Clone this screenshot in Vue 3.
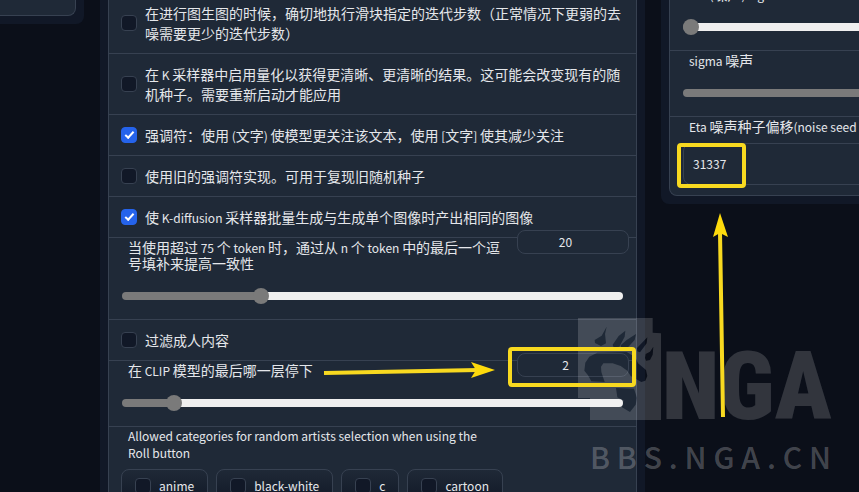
<script setup>
import { ref } from 'vue'

const toggles = ref([
  { id: 'steps', on: false, text: '在进行图生图的时候，确切地执行滑块指定的迭代步数（正常情况下更弱的去噪需要更少的迭代步数）' },
  { id: 'quant', on: false, text: '在 K 采样器中启用量化以获得更清晰、更清晰的结果。这可能会改变现有的随机种子。需要重新启动才能应用' },
  { id: 'emphasis', on: true, text: '强调符：使用 (文字) 使模型更关注该文本，使用 [文字] 使其减少关注' },
  { id: 'old-emphasis', on: false, text: '使用旧的强调符实现。可用于复现旧随机种子' },
  { id: 'batch', on: true, text: '使 K-diffusion 采样器批量生成与生成单个图像时产出相同的图像' },
])
const filterAdult = ref(false)
const padding = ref(20)
const clipLayers = ref(2)
const eta = ref(0)
const sigma = ref(1)
const seedDelta = ref('31337')
const categories = ref([
  { name: 'anime', on: false },
  { name: 'black-white', on: false },
  { name: 'c', on: false },
  { name: 'cartoon', on: false },
])

// Splits a label into runs so that Latin text can be set a size smaller than Han text.
function runs(text) {
  return text.match(/[\x20-\x7e]+|[^\x20-\x7e]+/g).map((t) => ({ t, latin: /^[\x20-\x7e]/.test(t) }))
}
function fill(value, min, max) {
  return { '--f': (value - min) / (max - min) }
}
</script>

<template>
  <main class="page">
    <section class="column column-left">
      <div class="panel"></div>
    </section>

    <section class="column column-main">
      <div class="panel">
        <div v-for="item in toggles" :key="item.id" class="row check-row">
          <input :id="item.id" v-model="item.on" type="checkbox" />
          <label :for="item.id"><span v-for="(r, i) in runs(item.text)" :key="i" :class="{ latin: r.latin }">{{ r.t }}</span></label>
        </div>

        <div class="row slider-row">
          <div class="slider-head">
            <label id="padding-label" for="padding"><span v-for="(r, i) in runs('当使用超过 75 个 token 时，通过从 n 个 token 中的最后一个逗号填补来提高一致性')" :key="i" :class="{ latin: r.latin }">{{ r.t }}</span></label>
            <input v-model.number="padding" class="number" type="number" min="0" max="74" aria-labelledby="padding-label" />
          </div>
          <input id="padding" v-model.number="padding" type="range" min="0" max="74" :style="fill(padding, 0, 74)" />
        </div>

        <div class="row check-row">
          <input id="filter" v-model="filterAdult" type="checkbox" />
          <label for="filter">过滤成人内容</label>
        </div>

        <div class="row slider-row">
          <div class="slider-head">
            <label id="clip-label" for="clip"><span v-for="(r, i) in runs('在 CLIP 模型的最后哪一层停下')" :key="i" :class="{ latin: r.latin }">{{ r.t }}</span></label>
            <input v-model.number="clipLayers" class="number" type="number" min="1" max="12" aria-labelledby="clip-label" />
          </div>
          <input id="clip" v-model.number="clipLayers" type="range" min="1" max="12" :style="fill(clipLayers, 1, 12)" />
        </div>

        <fieldset class="row group">
          <legend>Allowed categories for random artists selection when using the Roll button</legend>
          <div class="chips">
            <label v-for="c in categories" :key="c.name" class="chip">
              <input v-model="c.on" type="checkbox" />
              <span>{{ c.name }}</span>
            </label>
          </div>
        </fieldset>
      </div>
    </section>

    <section class="column column-right">
      <div class="panel">
        <div class="row slider-row">
          <div class="slider-head">
            <label for="eta"><span class="latin">Eta (</span>噪声<span class="latin">) sigma</span></label>
          </div>
          <input id="eta" v-model.number="eta" type="range" min="0" max="1" step="0.01" :style="fill(eta, 0, 1)" />
        </div>
        <div class="row slider-row">
          <div class="slider-head">
            <label for="sigma"><span class="latin">sigma </span>噪声</label>
          </div>
          <input id="sigma" v-model.number="sigma" type="range" min="0" max="1" step="0.01" :style="fill(sigma, 0, 1)" />
        </div>
        <div class="row seed-row">
          <label for="seed"><span class="latin">Eta </span>噪声种子偏移<span class="latin">(noise seed</span></label>
          <input id="seed" v-model="seedDelta" class="seed" type="text" />
        </div>
      </div>
    </section>

    <div class="watermark" aria-hidden="true">
      <div class="brand">
        <svg class="bear" viewBox="0 0 252 306" width="84" height="102">
          <path
            fill-rule="evenodd"
            d="M0 0H224V44L249 46V306H36V240H0Z
            M86 26 81 48 84 76 69 84 51 75 50 66 71 53Z
            M142 38 140 56 124 86 107 88 104 80 122 54Z
            M174 48 170 66 145 93 130 90 128 82 146 66Z
            M208 58 206 76 186 103 178 100 177 90Z
            M226 86 224 110 216 126 204 128 201 120 203 108 216 101Z
            M19 158 22 134 34 116 58 104 146 102 172 118 180 136 204 156 208 174 202 188 190 192 158 174 148 158 128 144 104 136 76 136 69 146 70 162 80 192 40 190 30 172Z
            M114 210 168 212 177 240 173 260 156 282 132 268 128 258 138 248 118 238Z"
          />
        </svg>
        <span class="brand-name">NGA</span>
      </div>
      <div class="domain"><span v-for="(ch, i) in 'BBS.NGA.CN'" :key="i">{{ ch }}</span></div>
    </div>

    <svg class="notes" width="859" height="492" viewBox="0 0 859 492" aria-hidden="true">
      <rect x="510" y="349" width="124" height="36" rx="2" />
      <rect x="679" y="145" width="65" height="41" rx="2" />
      <path class="shaft" d="M324 373 478 370M723 417 720 232" />
      <path class="head" d="M495 370 471 378 476 370 471 362ZM720 213 728 237 720 233 713 237Z" />
    </svg>
  </main>
</template>

<style>
body {
  background: #0b0f19;
}
</style>

<style scoped>
.page {
  position: relative;
  display: grid;
  grid-template-columns: 84px minmax(0, 1fr) 198px;
  gap: 16px;
  align-items: start;
  height: 100vh;
  overflow: hidden;
  background: #0b0f19;
  color: #e5e7eb;
  font: 14px/20px "Noto Sans CJK SC", sans-serif;
}
.latin {
  font-size: 12px;
  line-height: 12px;
}
.column {
  background: #111827;
  padding: 0 8px 8px;
}
.column-left {
  padding-left: 0;
  border-radius: 0 0 8px 0;
}
.column-left .panel {
  height: 15px;
  border-left: 0;
  border-radius: 0 0 8px 0;
}
.column-right {
  border-radius: 0 0 0 8px;
}
.column-right .panel {
  margin-right: -60px;
}
.panel {
  border: 1px solid #374151;
  border-top: 0;
  border-radius: 0 0 8px 8px;
  background: #1f2937;
}
.row {
  border-bottom: 1px solid #374151;
}
.row:last-child {
  border-bottom: 0;
}
.check-row {
  display: flex;
  align-items: center;
  gap: 8px;
  padding: 10px 12px;
}
.column-main .check-row:first-child {
  padding-top: 3px;
}
input {
  box-sizing: border-box;
  margin: 0;
  color: inherit;
  font: 12px/20px "Noto Sans CJK SC", sans-serif;
}
input[type="checkbox"] {
  appearance: none;
  display: grid;
  place-items: center;
  flex: none;
  width: 16px;
  height: 16px;
  border: 1px solid #374151;
  border-radius: 4px;
  background: #111827;
}
input[type="checkbox"]:checked {
  border-color: #2563eb;
  background: #2563eb;
}
input[type="checkbox"]:checked::before {
  content: "";
  width: 7px;
  height: 3px;
  border: solid #fff;
  border-width: 0 0 2px 2px;
  transform: rotate(-48deg) translate(1px, -1px);
}
.slider-row {
  display: flex;
  flex-direction: column;
  gap: 17px;
  padding: 1px 13px 15px;
}
.slider-head {
  display: flex;
  justify-content: space-between;
  align-items: flex-start;
  gap: 16px;
}
.slider-head label {
  padding-left: 6px;
  line-height: 16px;
}
.number {
  flex: none;
  width: 112px;
  height: 24px;
  margin: -9px -6px -16px 0;
  padding: 0 0 2px;
  border: 1px solid #374151;
  border-radius: 8px;
  background: #1f2937;
  text-align: center;
}
input[type="range"] {
  appearance: none;
  width: 100%;
  height: 16px;
  background: none;
}
input[type="range"]::-webkit-slider-runnable-track {
  height: 8px;
  border-radius: 4px;
  background: linear-gradient(
    to right,
    #7a7a7a calc(8px + (100% - 16px) * var(--f)),
    #efefef calc(8px + (100% - 16px) * var(--f))
  );
}
input[type="range"]::-webkit-slider-thumb {
  appearance: none;
  width: 16px;
  height: 16px;
  margin-top: -4px;
  border-radius: 50%;
  background: #7a7a7a;
}
.column-right .slider-row:first-child {
  margin-top: -15px;
}
.group {
  min-width: 0;
  margin: 0;
  padding: 0 12px 16px;
  border-width: 0;
  font-size: 12px;
}
.group legend {
  float: left;
  box-sizing: border-box;
  width: 376px;
  padding: 0 0 0 7px;
  line-height: 17px;
}
.chips {
  clear: both;
  display: flex;
  flex-wrap: wrap;
  gap: 8px;
  padding-top: 8px;
}
.chip {
  display: flex;
  align-items: center;
  gap: 8px;
  padding: 6px 13px;
  border: 1px solid #374151;
  border-radius: 8px;
  background: linear-gradient(to top, #111827, #1f2937);
}
.seed-row {
  display: flex;
  flex-direction: column;
  gap: 9px;
  padding: 1px 13px 10px;
  white-space: nowrap;
}
.seed-row label {
  padding-left: 6px;
  line-height: 16px;
}
.seed {
  width: 100%;
  height: 42px;
  padding: 0 9px 2px;
  border: 1px solid #374151;
  border-radius: 8px;
  background: #1f2937;
}
.watermark {
  position: absolute;
  right: 28px;
  bottom: 16px;
  width: 253px;
  color: rgb(255 255 255 / 16%);
  pointer-events: none;
}
.brand {
  display: flex;
  justify-content: space-between;
  align-items: flex-end;
}
.bear {
  flex: none;
  fill: currentColor;
}
.brand-name {
  font: 900 94px/66px "Roboto Condensed", Roboto, sans-serif;
}
.domain {
  display: flex;
  justify-content: space-between;
  padding: 16px 0 0 12px;
  color: rgb(255 255 255 / 24%);
  font: 500 30px/40px "Noto Sans CJK SC", sans-serif;
}
.notes {
  position: absolute;
  top: 0;
  left: 0;
  pointer-events: none;
}
.notes rect,
.shaft {
  fill: none;
  stroke: #f8d920;
  stroke-width: 4;
}
.head {
  fill: #fdda0c;
}
</style>
